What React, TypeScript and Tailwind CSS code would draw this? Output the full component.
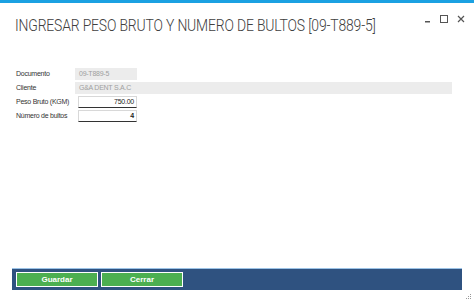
import React from "react";

export default function App() {
  return (
    <div className="w-[474px] h-[302px] bg-white flex flex-col relative overflow-hidden" style={{ fontFamily: "'Liberation Sans', Arial, sans-serif" }}>
      <div className="h-[3px] bg-[#1ba1e2] shrink-0" />
      <div className="relative h-[40px] shrink-0">
        <div className="pl-[15px] pt-[12px]">
          <div className="origin-left scale-x-[0.845] text-[16.5px] leading-[22px] text-[#404040] font-light whitespace-nowrap tracking-[-0.2px]" style={{ fontFamily: "Roboto, sans-serif" }}>
            INGRESAR PESO BRUTO Y NUMERO DE BULTOS [09-T889-5]
          </div>
        </div>
        <div className="absolute right-[9px] top-[12px] flex items-center gap-[9px]">
          <svg width="6" height="8" viewBox="0 0 6 8"><rect x="0" y="6" width="5" height="1.5" fill="#555" /></svg>
          <svg width="8" height="8" viewBox="0 0 8 8"><rect x="0.5" y="0.5" width="7" height="7" fill="none" stroke="#555" strokeWidth="1" /></svg>
          <svg width="8" height="8" viewBox="0 0 8 8"><path d="M1 1L7 7M7 1L1 7" stroke="#555" strokeWidth="1.2" /></svg>
        </div>
      </div>
      <div className="flex flex-col pt-[25px] pl-[16px] gap-[2px] text-[7px] tracking-[-0.25px] text-[#333] whitespace-nowrap">
        <div className="flex items-center h-[12px]">
          <span className="w-[59px] shrink-0 pt-[1px]">Documento</span>
          <div className="w-[62px] h-[12px] bg-[#ececec] text-[#a0a0a0] flex items-center pl-[4px]">09-T889-5</div>
        </div>
        <div className="flex items-center h-[12px]">
          <span className="w-[59px] shrink-0 pt-[1px]">Cliente</span>
          <div className="w-[377px] h-[12px] bg-[#ececec] text-[#a0a0a0] flex items-center pl-[4px]">G&amp;A DENT S.A.C</div>
        </div>
        <div className="flex items-center h-[12px]">
          <span className="w-[62px] shrink-0 pt-[1px]">Peso Bruto (KGM)</span>
          <div className="w-[59px] h-[12px] bg-white border border-[#d8d8d8] border-b-[#333] text-[#222] flex items-center justify-end pr-[2px]">750.00</div>
        </div>
        <div className="flex items-center h-[12px]">
          <span className="w-[62px] shrink-0 pt-[1px]">Número de bultos</span>
          <div className="w-[59px] h-[12px] bg-white border border-[#d8d8d8] border-b-[#333] text-[#222] font-bold flex items-center justify-end pr-[2px]">4</div>
        </div>
      </div>
      <div className="flex-1" />
      <div className="mx-[12px] h-[22px] bg-[#2f5280] border-t border-[#9cc3e6] flex items-center gap-[3px] pl-[4px] shrink-0">
        <button className="w-[82px] h-[15px] bg-[#4caf50] border border-white text-white text-[8px] font-bold flex items-center justify-center">Guardar</button>
        <button className="w-[82px] h-[15px] bg-[#4caf50] border border-white text-white text-[8px] font-bold flex items-center justify-center">Cerrar</button>
      </div>
      <div className="h-[12px] shrink-0 relative">
        <svg className="absolute right-[2px] bottom-[2px]" width="6" height="6" viewBox="0 0 6 6">
          <rect x="4" y="0" width="1" height="1" fill="#999" />
          <rect x="2" y="2" width="1" height="1" fill="#999" />
          <rect x="4" y="2" width="1" height="1" fill="#999" />
          <rect x="0" y="4" width="1" height="1" fill="#999" />
          <rect x="2" y="4" width="1" height="1" fill="#999" />
          <rect x="4" y="4" width="1" height="1" fill="#999" />
        </svg>
      </div>
    </div>
  );
}
